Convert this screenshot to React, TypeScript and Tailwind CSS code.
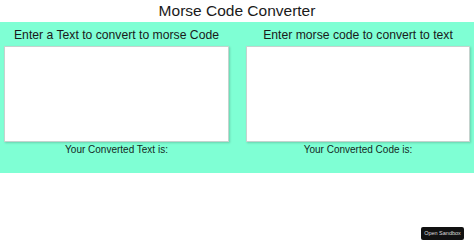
import React, { useState } from 'react';

const App: React.FC = () => {
  const [text, setText] = useState('');
  const [code, setCode] = useState('');

  return (
    <div className="w-[474px] h-[248px] bg-white relative font-['Liberation_Sans',Arial,sans-serif] text-[#1a1a1a]">
      <h1 className="h-[22px] flex items-center justify-center text-[15.5px] leading-none">Morse Code Converter</h1>
      <div className="bg-[#7fffd4] h-[151px] grid grid-cols-[225px_224px] gap-x-[17px] px-[4px]">
        <div className="flex flex-col items-center">
          <h2 className="h-[24px] flex items-center text-[12.2px] leading-none pt-[2px] whitespace-nowrap">Enter a Text to convert to morse Code</h2>
          <textarea
            value={text}
            onChange={e => setText(e.target.value)}
            className="w-full h-[96px] bg-white border border-[#c5d3ce] shadow-[1px_1px_2px_rgba(0,0,0,0.18)] outline-none resize-none"
          />
          <p className="mt-[3px] text-[10px] leading-none text-[#142a24]">Your Converted Text is:</p>
        </div>
        <div className="flex flex-col items-center">
          <h2 className="h-[24px] flex items-center text-[12.2px] leading-none pt-[2px] whitespace-nowrap">Enter morse code to convert to text</h2>
          <textarea
            value={code}
            onChange={e => setCode(e.target.value)}
            className="w-full h-[96px] bg-white border border-[#c5d3ce] shadow-[1px_1px_2px_rgba(0,0,0,0.18)] outline-none resize-none"
          />
          <p className="mt-[3px] text-[10px] leading-none text-[#142a24]">Your Converted Code is:</p>
        </div>
      </div>
      <button className="absolute left-[421px] top-[227px] w-[43px] h-[13px] bg-[#111] text-[#ddd] text-[5.5px] rounded-[2px] flex items-center justify-center">
        Open Sandbox
      </button>
    </div>
  );
};

export default App;
